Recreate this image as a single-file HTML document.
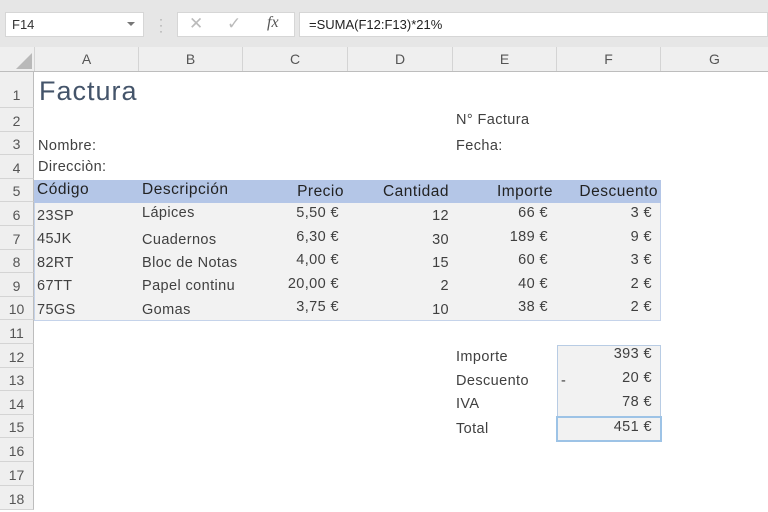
<!DOCTYPE html>
<html><head><meta charset="utf-8"><style>
*{margin:0;padding:0;box-sizing:border-box}
body{width:768px;height:492px;overflow:hidden;background:#fff;font-family:"Liberation Sans",sans-serif;position:relative;color:#404040}
.a{position:absolute;white-space:nowrap}
.t{position:absolute;font-size:14.5px;letter-spacing:0.4px;height:24px;line-height:24px;white-space:nowrap}
.r{text-align:right}
.rh{position:absolute;left:0;width:34px;text-align:center;font-size:14px;color:#555;border-bottom:1px solid #d4d4d4;background:#efefef;border-right:1px solid #bdbdbd}
.ch{position:absolute;top:47px;height:24px;line-height:24px;text-align:center;font-size:14px;color:#555;border-right:1px solid #d4d4d4}
.h{font-size:15.5px;color:#222;letter-spacing:0.5px}
</style></head><body>
<div class="a" style="left:0;top:0;width:768px;height:47px;background:#e6e6e6"></div>
<div class="a" style="left:5px;top:12px;width:139px;height:25px;background:#fff;border:1px solid #d6d6d6;font-size:13px;line-height:23px;padding-left:6px;color:#333">F14</div>
<div class="a" style="left:127px;top:22px;width:0;height:0;border-left:4px solid transparent;border-right:4px solid transparent;border-top:4px solid #777"></div>
<div class="a" style="left:159px;top:16px;color:#999;font-size:12px;line-height:6px">·<br>·<br>·</div>
<div class="a" style="left:177px;top:12px;width:118px;height:25px;background:#fff;border:1px solid #d6d6d6"></div>
<div class="a" style="left:189px;top:14px;font-size:17px;color:#bbb">✕</div>
<div class="a" style="left:227px;top:14px;font-size:17px;color:#bbb">✓</div>
<div class="a" style="left:267px;top:14px;font-size:16px;color:#555;font-family:'Liberation Serif',serif;font-style:italic">fx</div>
<div class="a" style="left:299px;top:12px;width:469px;height:25px;background:#fff;border:1px solid #d6d6d6;font-size:13px;line-height:23px;padding-left:9px;color:#222">=SUMA(F12:F13)*21%</div>
<div class="a" style="left:0;top:47px;width:768px;height:25px;background:#efefef;border-bottom:1px solid #bdbdbd"></div>
<div class="a" style="left:16px;top:53px;width:0;height:0;border-left:16px solid transparent;border-bottom:16px solid #b9b9b9"></div>
<div class="ch" style="left:34px;width:105px;border-left:1px solid #d4d4d4">A</div>
<div class="ch" style="left:139px;width:104px">B</div>
<div class="ch" style="left:243px;width:105px">C</div>
<div class="ch" style="left:348px;width:105px">D</div>
<div class="ch" style="left:453px;width:104px">E</div>
<div class="ch" style="left:557px;width:104px">F</div>
<div class="ch" style="left:661px;width:107px;border-right:none">G</div>
<div class="rh" style="top:72px;height:36px;line-height:46px">1</div>
<div class="rh" style="top:108px;height:24px;line-height:26px">2</div>
<div class="rh" style="top:132px;height:23px;line-height:25px">3</div>
<div class="rh" style="top:155px;height:24px;line-height:26px">4</div>
<div class="rh" style="top:179px;height:23px;line-height:25px">5</div>
<div class="rh" style="top:202px;height:24px;line-height:26px">6</div>
<div class="rh" style="top:226px;height:24px;line-height:26px">7</div>
<div class="rh" style="top:250px;height:23px;line-height:25px">8</div>
<div class="rh" style="top:273px;height:24px;line-height:26px">9</div>
<div class="rh" style="top:297px;height:23px;line-height:25px">10</div>
<div class="rh" style="top:320px;height:24px;line-height:26px">11</div>
<div class="rh" style="top:344px;height:24px;line-height:26px">12</div>
<div class="rh" style="top:368px;height:23px;line-height:25px">13</div>
<div class="rh" style="top:391px;height:24px;line-height:26px">14</div>
<div class="rh" style="top:415px;height:23px;line-height:25px">15</div>
<div class="rh" style="top:438px;height:24px;line-height:26px">16</div>
<div class="rh" style="top:462px;height:24px;line-height:26px">17</div>
<div class="rh" style="top:486px;height:24px;line-height:26px">18</div>

<div class="a" style="left:39px;top:76px;font-size:27px;letter-spacing:1px;color:#44546a">Factura</div>
<div class="t" style="left:456px;top:108px">N° Factura</div>
<div class="t" style="left:38px;top:134px">Nombre:</div>
<div class="t" style="left:456px;top:134px">Fecha:</div>
<div class="t" style="left:38px;top:155px">Direcciòn:</div>

<div class="a" style="left:34px;top:180px;width:627px;height:141px;background:#f2f2f2;border:1px solid #c5d3ea"></div>
<div class="a" style="left:34px;top:180px;width:627px;height:23px;background:#b4c6e7"></div>
<div class="t h" style="left:37px;top:178px">Código</div>
<div class="t h" style="left:142px;top:178px">Descripción</div>
<div class="t r h" style="left:243px;width:101px;top:180px">Precio</div>
<div class="t r h" style="left:340px;width:109px;top:180px">Cantidad</div>
<div class="t r h" style="left:453px;width:100px;top:180px">Importe</div>
<div class="t r h" style="left:550px;width:108px;top:180px">Descuento</div>

<div class="t" style="left:37px;top:204px">23SP</div><div class="t" style="left:142px;top:201px">Lápices</div><div class="t r" style="left:243px;width:96px;top:201px">5,50 €</div><div class="t r" style="left:348px;width:101px;top:204px">12</div><div class="t r" style="left:453px;width:95px;top:201px">66 €</div><div class="t r" style="left:557px;width:95px;top:201px">3 €</div>
<div class="t" style="left:37px;top:227px">45JK</div><div class="t" style="left:142px;top:228px">Cuadernos</div><div class="t r" style="left:243px;width:96px;top:225px">6,30 €</div><div class="t r" style="left:348px;width:101px;top:228px">30</div><div class="t r" style="left:453px;width:95px;top:225px">189 €</div><div class="t r" style="left:557px;width:95px;top:225px">9 €</div>
<div class="t" style="left:37px;top:251px">82RT</div><div class="t" style="left:142px;top:251px">Bloc de Notas</div><div class="t r" style="left:243px;width:96px;top:248px">4,00 €</div><div class="t r" style="left:348px;width:101px;top:251px">15</div><div class="t r" style="left:453px;width:95px;top:248px">60 €</div><div class="t r" style="left:557px;width:95px;top:248px">3 €</div>
<div class="t" style="left:37px;top:274px">67TT</div><div class="t" style="left:142px;top:274px">Papel continu</div><div class="t r" style="left:243px;width:96px;top:272px">20,00 €</div><div class="t r" style="left:348px;width:101px;top:274px">2</div><div class="t r" style="left:453px;width:95px;top:272px">40 €</div><div class="t r" style="left:557px;width:95px;top:272px">2 €</div>
<div class="t" style="left:37px;top:298px">75GS</div><div class="t" style="left:142px;top:298px">Gomas</div><div class="t r" style="left:243px;width:96px;top:295px">3,75 €</div><div class="t r" style="left:348px;width:101px;top:298px">10</div><div class="t r" style="left:453px;width:95px;top:295px">38 €</div><div class="t r" style="left:557px;width:95px;top:295px">2 €</div>

<div class="a" style="left:557px;top:345px;width:104px;height:96px;background:#f2f2f2;border:1px solid #b8cce4"></div>
<div class="a" style="left:556px;top:416px;width:106px;height:26px;border:2px solid #9dc3e6"></div>
<div class="t" style="left:456px;top:345px">Importe</div><div class="t r" style="left:557px;width:95px;top:342px">393 €</div>
<div class="t" style="left:456px;top:369px">Descuento</div><div class="t" style="left:561px;top:369px">-</div><div class="t r" style="left:557px;width:95px;top:366px">20 €</div>
<div class="t" style="left:456px;top:392px">IVA</div><div class="t r" style="left:557px;width:95px;top:390px">78 €</div>
<div class="t" style="left:456px;top:417px">Total</div><div class="t r" style="left:557px;width:95px;top:415px">451 €</div>
</body></html>
